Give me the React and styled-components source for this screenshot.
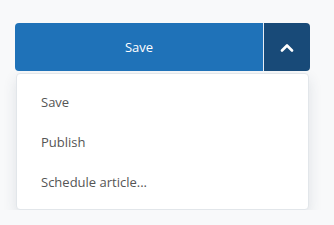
import React, { useState } from 'react';
import styled, { createGlobalStyle } from 'styled-components';

const GlobalStyle = createGlobalStyle`
  html, body {
    margin: 0;
    padding: 0;
    background: #f8f9fa;
    font-family: "Open Sans", "Noto Sans", sans-serif;
  }
`;

const Page = styled.div`
  padding: 23px 24px 0 15px;
`;

const SplitButton = styled.div`
  display: flex;
  height: 48px;
  border-radius: 4px;
  overflow: hidden;
`;

const MainButton = styled.button`
  flex: 1;
  border: 0;
  background: #1f72b8;
  color: #fff;
  font-family: inherit;
  font-size: 13px;
  cursor: pointer;
  padding: 0;
`;

const ToggleButton = styled.button`
  width: 47px;
  border: 0;
  border-left: 1px solid #e8eef5;
  background: #184a78;
  color: #fff;
  display: flex;
  align-items: center;
  justify-content: center;
  cursor: pointer;
  padding: 0;
`;

const Menu = styled.ul`
  list-style: none;
  margin: 2px 1px 0;
  padding: 8px 0 7px;
  background: #fff;
  border: 1px solid #e2e6ea;
  border-radius: 4px;
  box-shadow: 0 6px 14px rgba(40, 60, 80, 0.12);
`;

const MenuItem = styled.li`
  height: 40px;
  display: flex;
  align-items: center;
  padding-left: 24px;
  font-size: 13px;
  color: #555;
  cursor: pointer;
`;

const items = ['Save', 'Publish', 'Schedule article...'];

export default function App() {
  const [open, setOpen] = useState(true);
  return (
    <>
      <GlobalStyle />
      <Page>
        <SplitButton>
          <MainButton>Save</MainButton>
          <ToggleButton onClick={() => setOpen(!open)}>
            <svg width="14" height="9" viewBox="0 0 14 9">
              <path d="M2 7.5 L7 2.5 L12 7.5" fill="none" stroke="#fff" strokeWidth="2.6" strokeLinecap="round" strokeLinejoin="round" />
            </svg>
          </ToggleButton>
        </SplitButton>
        {open && (
          <Menu>
            {items.map((it) => (
              <MenuItem key={it}>{it}</MenuItem>
            ))}
          </Menu>
        )}
      </Page>
    </>
  );
}
